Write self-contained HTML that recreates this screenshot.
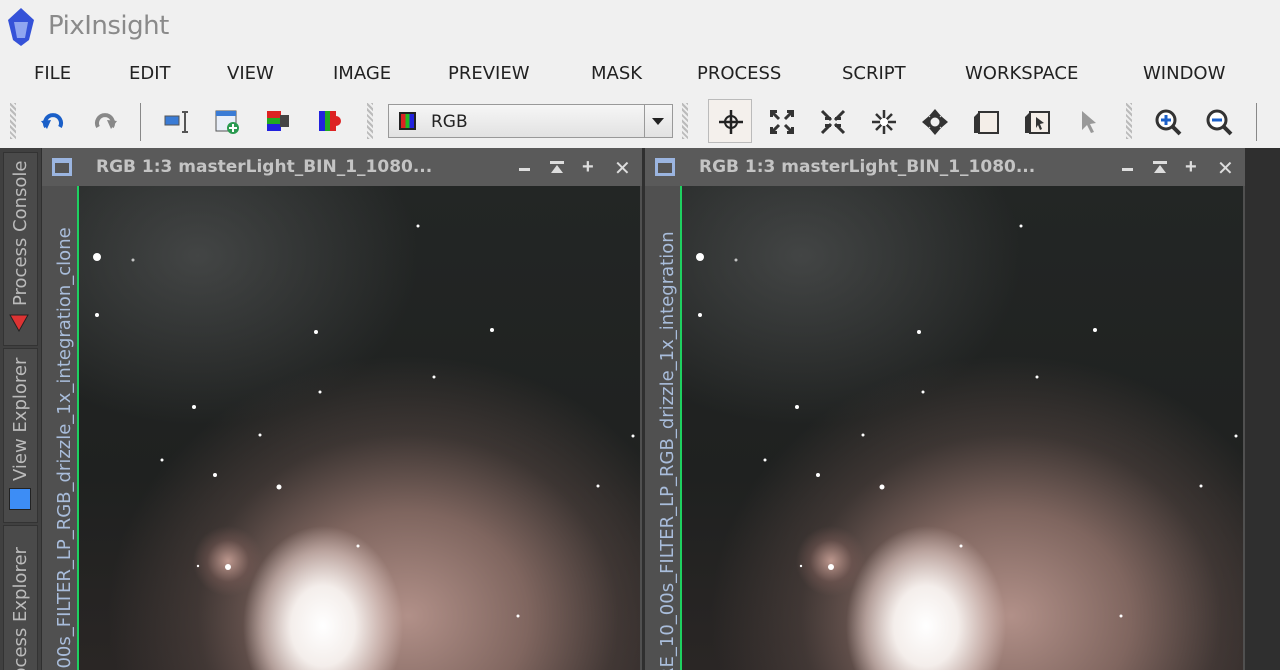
<!DOCTYPE html>
<html><head><meta charset="utf-8"><style>
*{margin:0;padding:0;box-sizing:border-box}
html,body{width:1280px;height:670px;overflow:hidden}
body{background:#2f2f2f;font-family:"Liberation Sans","DejaVu Sans",sans-serif;position:relative}
.top{position:absolute;left:0;top:0;width:1280px;height:148px;background:#f0f0f0}
.title{position:absolute;left:48px;top:11px;font-size:26px;color:#8a8a8a;font-family:"DejaVu Sans",sans-serif;letter-spacing:-0.5px}
.menu{position:absolute;top:63px;font-size:18px;color:#222;font-family:"DejaVu Sans",sans-serif}
.grip{position:absolute;top:103px;width:6px;height:36px;background:repeating-linear-gradient(45deg,#bbb 0 2px,#eee 2px 4px)}
.ico{position:absolute;top:107px}
.side{position:absolute;left:0;top:148px;width:41px;height:522px;background:#404040}
.tab{position:absolute;left:3px;width:35px;background:#4a4a4a;border:1px solid #333}
.vt{position:absolute;transform:rotate(-90deg);transform-origin:left top;white-space:nowrap;color:#bbb;font-size:18px;font-family:"DejaVu Sans",sans-serif}
.win{position:absolute;top:148px;width:600px;height:522px;background:#505050}
.wt{position:absolute;left:0;top:0;width:600px;height:38px;background:#5a5a5a}
.wt span{position:absolute;left:54px;top:9px;color:#c4c4c4;font-size:17px;font-weight:bold;font-family:"DejaVu Sans",sans-serif}
.wicon{position:absolute;left:10px;top:10px;width:20px;height:18px;border:3px solid #9bb5e0;border-top-width:5px;background:#555}
.img{position:absolute;left:36px;top:38px;width:562px;height:484px;overflow:hidden;
background:
radial-gradient(ellipse 80px 100px at 245px 440px,#fff 0%,#f4eeeb 40%,rgba(225,205,200,.6) 75%,rgba(0,0,0,0) 100%),
radial-gradient(ellipse 35px 35px at 150px 375px,rgba(200,160,150,.9),rgba(120,90,85,.5) 60%,rgba(0,0,0,0) 100%),
radial-gradient(ellipse 300px 260px at 330px 430px,rgba(185,150,142,.95) 0%,rgba(150,118,110,.8) 40%,rgba(85,70,66,.55) 70%,rgba(0,0,0,0) 100%),
radial-gradient(ellipse 220px 170px at 120px 70px,rgba(75,77,77,.8),rgba(0,0,0,0)),
linear-gradient(180deg,#232625 0%,#1f2120 60%,#2a2625 100%)}
.gl{position:absolute;left:35px;top:38px;width:2px;height:484px;background:#1ed060}
.close{position:absolute;top:8px;color:#ddd;font-size:20px;font-weight:bold}
</style></head><body>
<div class="top"></div>
<svg style="position:absolute;left:6px;top:6px" width="30" height="40" viewBox="0 0 30 40"><path d="M15 2 L28 14 L23 34 L15 40 L7 34 L2 14Z" fill="#3552d8"/><path d="M8 16 L22 16 L19 32 L11 32Z" fill="#8fa5f0"/></svg>
<div class="title">PixInsight</div>
<div class="menu" style="left:34px">FILE</div><div class="menu" style="left:129px">EDIT</div><div class="menu" style="left:227px">VIEW</div><div class="menu" style="left:333px">IMAGE</div><div class="menu" style="left:448px">PREVIEW</div><div class="menu" style="left:591px">MASK</div><div class="menu" style="left:697px">PROCESS</div><div class="menu" style="left:842px">SCRIPT</div><div class="menu" style="left:965px">WORKSPACE</div><div class="menu" style="left:1143px">WINDOW</div>
<div class="grip" style="left:10px"></div><div class="grip" style="left:367px"></div><div class="grip" style="left:682px"></div><div class="grip" style="left:1126px"></div>
<svg class="ico" style="left:38px" width="30" height="30" viewBox="0 0 30 30"><path d="M8 20 A8 8 0 1 1 22 20" fill="none" stroke="#1a5fc8" stroke-width="4"/><path d="M3 14 L9 22 L13 13Z" fill="#1a5fc8"/></svg>
<svg class="ico" style="left:90px" width="30" height="30" viewBox="0 0 30 30"><path d="M8 20 A8 8 0 1 1 22 20" fill="none" stroke="#888" stroke-width="4"/><path d="M27 14 L21 22 L17 13Z" fill="#888"/></svg>
<div style="position:absolute;left:140px;top:103px;width:1px;height:38px;background:#888"></div>
<svg class="ico" style="left:162px" width="30" height="30"><rect x="3" y="9" width="14" height="9" fill="#3a7bd5" stroke="#555"/><path d="M20 5h6M23 5v20M20 25h6" stroke="#555" stroke-width="2"/></svg>
<svg class="ico" style="left:213px" width="30" height="30"><rect x="3" y="4" width="20" height="20" fill="#e8eef8" stroke="#555"/><rect x="3" y="4" width="20" height="5" fill="#3a7bd5"/><circle cx="20" cy="21" r="6" fill="#2a9a50"/><path d="M20 17v8M16 21h8" stroke="#fff" stroke-width="2"/></svg>
<svg class="ico" style="left:264px" width="30" height="30"><rect x="3" y="4" width="14" height="7" fill="#d22"/><rect x="3" y="11" width="14" height="6" fill="#2a2"/><rect x="3" y="17" width="14" height="7" fill="#22d"/><rect x="16" y="8" width="9" height="12" fill="#444"/></svg>
<svg class="ico" style="left:316px" width="30" height="30"><rect x="3" y="4" width="6" height="20" fill="#22d"/><rect x="9" y="4" width="5" height="20" fill="#2a2"/><rect x="14" y="4" width="6" height="20" fill="#d22"/><circle cx="20" cy="14" r="5" fill="#d22"/></svg>
<div style="position:absolute;left:388px;top:104px;width:285px;height:34px;border:1px solid #999;background:linear-gradient(#f6f6f6,#e2e2e2)">
<div style="position:absolute;left:10px;top:7px;width:17px;height:18px;border:2px solid #222;background:linear-gradient(90deg,#d22 33%,#2b2 33% 66%,#22d 66%)"></div>
<div style="position:absolute;left:42px;top:7px;font-size:17px;color:#222;font-family:'DejaVu Sans',sans-serif">RGB</div>
<div style="position:absolute;right:0;top:0;width:28px;height:32px;border-left:1px solid #999"></div>
<div style="position:absolute;right:8px;top:13px;border:6px solid transparent;border-top:7px solid #222"></div></div>
<div style="position:absolute;left:708px;top:99px;width:44px;height:44px;border:1px solid #bbb;background:#f4f0ec"></div>
<svg class="ico" style="left:716px" width="30" height="30"><circle cx="15" cy="15" r="6" fill="none" stroke="#222" stroke-width="2"/><path d="M15 3v24M3 15h24" stroke="#222" stroke-width="2.5"/></svg>
<svg class="ico" style="left:767px" width="30" height="30"><path d="M4 4l8 8M26 4l-8 8M4 26l8-8M26 26l-8-8" stroke="#333" stroke-width="3"/><path d="M3 3h7v3H6v4H3zM27 3h-7v3h4v4h3zM3 27h7v-3H6v-4H3zM27 27h-7v-3h4v-4h3z" fill="#333"/></svg>
<svg class="ico" style="left:818px" width="30" height="30"><path d="M4 4l9 9M26 4l-9 9M4 26l9-9M26 26l-9-9" stroke="#333" stroke-width="3"/><path d="M13 13h-6v-3h6zM17 13h6v-3h-6zM13 17h-6v3h6zM17 17h6v3h-6z" fill="#333"/></svg>
<svg class="ico" style="left:869px" width="30" height="30"><path d="M15 3v24M3 15h24M7 7l16 16M23 7L7 23" stroke="#333" stroke-width="2.5"/><circle cx="15" cy="15" r="4" fill="#fff"/></svg>
<svg class="ico" style="left:920px" width="30" height="30"><path d="M15 2l6 7H9zM15 28l6-7H9zM2 15l7 6V9zM28 15l-7 6V9z" fill="#333"/><circle cx="15" cy="15" r="6" fill="none" stroke="#333" stroke-width="3"/></svg>
<svg class="ico" style="left:971px" width="30" height="30"><rect x="8" y="5" width="19" height="21" fill="#f4eee8" stroke="#333" stroke-width="2"/><path d="M3 10l5-5v21H3z" fill="#333"/></svg>
<svg class="ico" style="left:1022px" width="30" height="30"><rect x="8" y="5" width="19" height="21" fill="#f4eee8" stroke="#333" stroke-width="2"/><path d="M3 10l5-5v21H3z" fill="#333"/><path d="M14 10l8 6-4 1 2 5-2 1-2-5-2 3z" fill="#333"/></svg>
<svg class="ico" style="left:1074px" width="30" height="30"><path d="M8 4l14 12-6 1 4 8-3 1-4-8-5 5z" fill="#999"/></svg>
<svg class="ico" style="left:1153px" width="30" height="30"><circle cx="13" cy="13" r="9" fill="#fff" stroke="#333" stroke-width="3"/><path d="M13 8v10M8 13h10" stroke="#1a5fc8" stroke-width="3"/><path d="M20 20l7 7" stroke="#333" stroke-width="4"/></svg>
<svg class="ico" style="left:1204px" width="30" height="30"><circle cx="13" cy="13" r="9" fill="#fff" stroke="#333" stroke-width="3"/><path d="M8 13h10" stroke="#1a5fc8" stroke-width="3"/><path d="M20 20l7 7" stroke="#333" stroke-width="4"/></svg>
<div style="position:absolute;left:1256px;top:103px;width:1px;height:38px;background:#888"></div>

<div class="side">
<div class="tab" style="top:4px;height:194px"></div>
<div class="tab" style="top:200px;height:175px"></div>
<div class="tab" style="top:377px;height:150px"></div>
<div class="vt" style="left:10px;top:158px">Process Console</div>
<svg style="position:absolute;left:8px;top:165px" width="22" height="20"><path d="M2 2h18L11 18z" fill="#d33" stroke="#222"/></svg>
<div class="vt" style="left:10px;top:333px">View Explorer</div>
<div style="position:absolute;left:9px;top:340px;width:22px;height:22px;background:#3d8df5;border:1px solid #222"></div>
<div class="vt" style="left:10px;top:548px">Process Explorer</div>
</div>

<div class="win" style="left:42px">
<div class="wt"><div class="wicon"></div><span>RGB 1:3 masterLight_BIN_1_1080...</span>
<div style="position:absolute;left:477px;top:20px;width:11px;height:3px;background:#ddd"></div>
<div style="position:absolute;left:508px;top:13px;width:14px;height:3px;background:#ddd"></div><svg style="position:absolute;left:508px;top:15px" width="14" height="12"><path d="M1 10l6-8 6 8z" fill="#ddd"/></svg>
<div class="close" style="left:540px">+</div><div class="close" style="left:572px">✕</div></div>
<div class="vt" style="left:12px;top:532px;color:#a9bddb">100s_FILTER_LP_RGB_drizzle_1x_integration_clone</div>
<div class="img"><svg width="562" height="484"><g fill="#fff">
<circle cx="19" cy="71" r="4"/><circle cx="55" cy="74" r="1.5" opacity=".7"/><circle cx="19" cy="129" r="2"/><circle cx="238" cy="146" r="2"/><circle cx="414" cy="144" r="2"/><circle cx="356" cy="191" r="1.5"/><circle cx="116" cy="221" r="2"/><circle cx="242" cy="206" r="1.5"/><circle cx="182" cy="249" r="1.5"/><circle cx="201" cy="301" r="2.5"/><circle cx="137" cy="289" r="2"/><circle cx="84" cy="274" r="1.5"/><circle cx="150" cy="381" r="3"/><circle cx="340" cy="40" r="1.5"/><circle cx="555" cy="250" r="1.5"/><circle cx="520" cy="300" r="1.5"/><circle cx="280" cy="360" r="1.5"/><circle cx="120" cy="380" r="1.2"/><circle cx="440" cy="430" r="1.5"/></g></svg></div>
<div class="gl"></div>
</div>

<div class="win" style="left:645px">
<div class="wt"><div class="wicon"></div><span>RGB 1:3 masterLight_BIN_1_1080...</span>
<div style="position:absolute;left:477px;top:20px;width:11px;height:3px;background:#ddd"></div>
<div style="position:absolute;left:508px;top:13px;width:14px;height:3px;background:#ddd"></div><svg style="position:absolute;left:508px;top:15px" width="14" height="12"><path d="M1 10l6-8 6 8z" fill="#ddd"/></svg>
<div class="close" style="left:540px">+</div><div class="close" style="left:572px">✕</div></div>
<div class="vt" style="left:12px;top:532px;color:#a9bddb">RE_10_00s_FILTER_LP_RGB_drizzle_1x_integration</div>
<div class="img"><svg width="562" height="484"><g fill="#fff">
<circle cx="19" cy="71" r="4"/><circle cx="55" cy="74" r="1.5" opacity=".7"/><circle cx="19" cy="129" r="2"/><circle cx="238" cy="146" r="2"/><circle cx="414" cy="144" r="2"/><circle cx="356" cy="191" r="1.5"/><circle cx="116" cy="221" r="2"/><circle cx="242" cy="206" r="1.5"/><circle cx="182" cy="249" r="1.5"/><circle cx="201" cy="301" r="2.5"/><circle cx="137" cy="289" r="2"/><circle cx="84" cy="274" r="1.5"/><circle cx="150" cy="381" r="3"/><circle cx="340" cy="40" r="1.5"/><circle cx="555" cy="250" r="1.5"/><circle cx="520" cy="300" r="1.5"/><circle cx="280" cy="360" r="1.5"/><circle cx="120" cy="380" r="1.2"/><circle cx="440" cy="430" r="1.5"/></g></svg></div>
<div class="gl"></div>
</div>
</body></html>
